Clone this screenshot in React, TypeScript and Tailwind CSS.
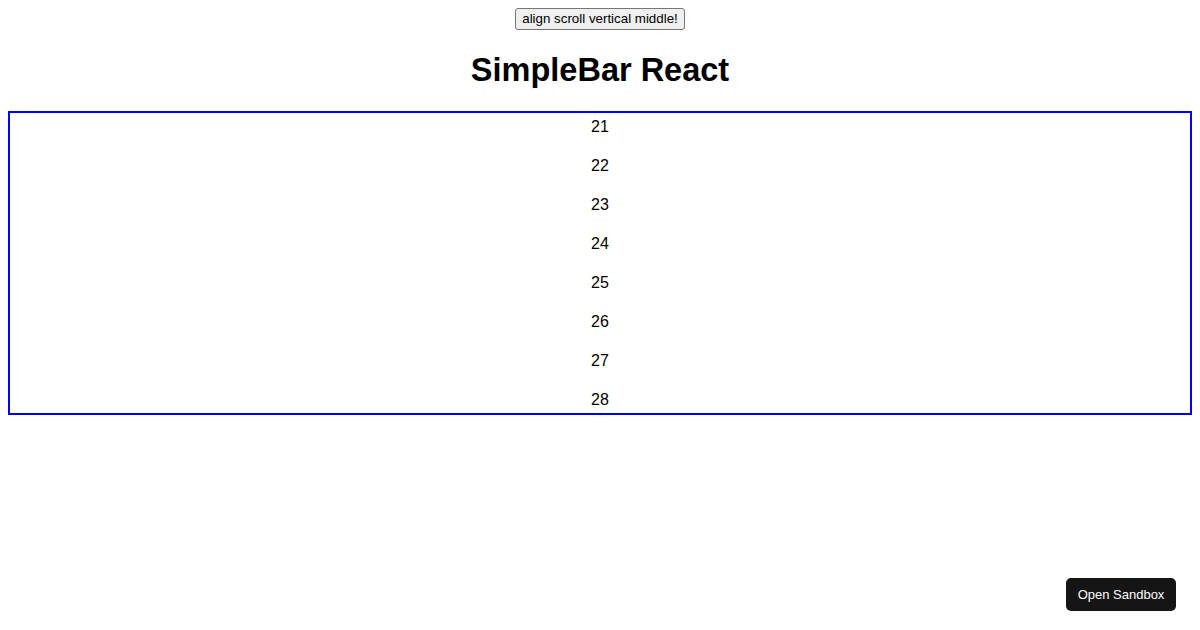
const ITEMS = [21, 22, 23, 24, 25, 26, 27, 28];

export default function App() {
  return (
    <div className="relative h-[630px] w-[1200px] bg-white p-2 font-['Liberation_Sans',Arial,sans-serif] text-black">
      <div className="flex justify-center">
        <button className="h-[22px] rounded-[3px] border border-[#767676] bg-[#efefef] px-[6px] text-[13.33px] leading-[18px] text-black">
          align scroll vertical middle!
        </button>
      </div>
      <h1 className="mb-[22px] mt-[22px] text-center text-[32.5px] font-bold leading-[37px]">SimpleBar React</h1>
      <div className="h-[304px] overflow-hidden border-2 border-[#0000ff]">
        <div className="-mt-[6px]">
          {ITEMS.map((n) => (
            <div key={n} className="h-[39px] text-center text-base leading-[39px]">
              {n}
            </div>
          ))}
        </div>
      </div>
      <button className="absolute bottom-[19px] right-[24px] h-[33px] w-[110px] rounded-[5px] bg-[#151515] text-[13px] text-white">
        Open Sandbox
      </button>
    </div>
  );
}
